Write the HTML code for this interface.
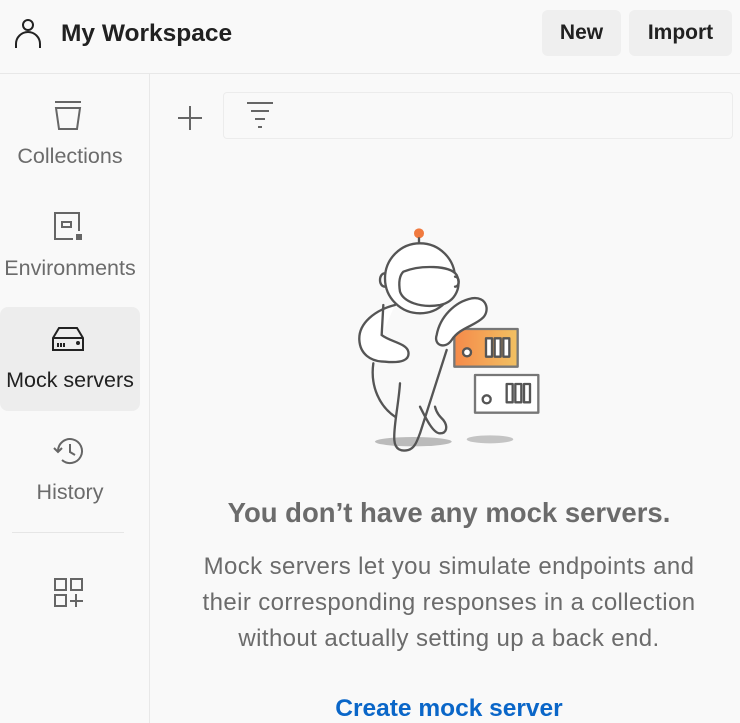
<!DOCTYPE html>
<html><head><meta charset="utf-8"><style>
body{margin:0;width:740px;height:723px;background:#f9f9f9;font-family:"Liberation Sans",sans-serif;overflow:hidden;position:relative}
.a{position:absolute}
.btn{position:absolute;top:10px;height:46px;background:#efefef;border-radius:6px;font-size:21px;font-weight:bold;color:#212121;line-height:46px;text-align:center}
.nav{position:absolute;left:-10px;width:160px;text-align:center;font-size:21.5px;color:#6b6b6b}
</style></head><body>
<svg class="a" style="left:14px;top:17px" width="28" height="32" viewBox="0 0 28 32" fill="none" stroke="#222" stroke-width="2"><circle cx="14" cy="8" r="5"/><path d="M2 31v-4a12 12 0 0 1 24 0v4"/></svg>
<div class="a" style="left:61px;top:20px;font-size:24.5px;font-weight:bold;color:#212121">My Workspace</div>
<div class="btn" style="left:542px;width:79px">New</div>
<div class="btn" style="left:629px;width:103px">Import</div>
<div class="a" style="left:0;top:73px;width:740px;height:1px;background:#e8e8e8"></div>
<div class="a" style="left:149px;top:74px;width:1px;height:649px;background:#e8e8e8"></div>

<svg class="a" style="left:52px;top:100px" width="32" height="32" viewBox="0 0 32 32" fill="none" stroke="#666" stroke-width="2"><path d="M3 2h26"/><path d="M4 8h24l-3 21H7z"/></svg>
<div class="nav" style="top:144px">Collections</div>
<svg class="a" style="left:53px;top:211px" width="32" height="32" viewBox="0 0 32 32" fill="none" stroke="#666" stroke-width="2"><path d="M26 20V2H2v26h18"/><rect x="9" y="11" width="9" height="5"/><rect x="24" y="24" width="4" height="4" fill="#666"/></svg>
<div class="nav" style="top:256px">Environments</div>
<div class="a" style="left:0;top:307px;width:140px;height:104px;background:#ededed;border-radius:8px"></div>
<svg class="a" style="left:51px;top:326px" width="34" height="26" viewBox="0 0 34 26" fill="none" stroke="#222" stroke-width="2"><path d="M2 12L8 2h18l6 10v12H2z"/><path d="M2 12h30"/><path d="M7 17v4M10 17v4M13 17v4"/><circle cx="27" cy="17" r="1" fill="#222"/></svg>
<div class="nav" style="top:368px;color:#212121">Mock servers</div>
<svg class="a" style="left:52px;top:434px" width="34" height="34" viewBox="0 0 34 34" fill="none" stroke="#666" stroke-width="2"><path d="M6 17a12 12 0 1 1 4 9"/><path d="M2 14l4 4 4-4"/><path d="M18 10v8l5 3"/></svg>
<div class="nav" style="top:480px">History</div>
<div class="a" style="left:12px;top:532px;width:112px;height:1px;background:#e6e6e6"></div>
<svg class="a" style="left:53px;top:577px" width="32" height="32" viewBox="0 0 32 32" fill="none" stroke="#666" stroke-width="2"><rect x="2" y="2" width="11" height="11"/><rect x="18" y="2" width="11" height="11"/><rect x="2" y="18" width="11" height="11"/><path d="M23 17v13M17 24h13"/></svg>

<svg class="a" style="left:176px;top:104px" width="28" height="28" viewBox="0 0 28 28" stroke="#666" stroke-width="2"><path d="M14 2v24M2 14h24"/></svg>
<div class="a" style="left:223px;top:92px;width:508px;height:45px;border:1px solid #ececec;border-radius:4px;background:#f9f9f9"></div>
<svg class="a" style="left:245px;top:101px" width="30" height="28" viewBox="0 0 30 28" stroke="#666" stroke-width="2"><path d="M2 2h26M6 10h18M10 18h10M13 26h4"/></svg>

<svg class="a" style="left:340px;top:220px" width="220" height="240" viewBox="0 0 660 720" fill="none" stroke="#555" stroke-width="7" stroke-linejoin="round" stroke-linecap="round">
<defs><linearGradient id="g" x1="0" x2="1"><stop offset="0" stop-color="#f58a4a"/><stop offset="1" stop-color="#f2c162"/></linearGradient></defs>
<ellipse cx="220" cy="665" rx="115" ry="14" fill="#bbb" stroke="none"/>
<ellipse cx="450" cy="658" rx="70" ry="12" fill="#c4c4c4" stroke="none"/>
<circle cx="237" cy="40" r="15" fill="#f07a3f" stroke="none"/>
<path d="M237 55v20"/>
<path d="M165 255C105 270 55 310 58 360C60 400 90 425 135 425C185 430 210 420 205 395C200 370 150 365 125 345" fill="#fff"/>
<path d="M100 430C90 500 120 560 165 590"/>
<path d="M240 560C260 600 280 640 300 640C320 640 325 620 310 600C300 590 290 580 285 560"/>
<path d="M180 490C175 560 160 620 163 660C165 690 185 695 205 690C225 685 232 660 240 640L320 390"/>
<path d="M130 255L125 345"/>
<circle cx="240" cy="175" r="105" fill="#fff"/>
<path d="M190 155c50-20 140-20 160 10 15 30 0 80-50 90-60 10-110-10-120-40-5-30 0-50 10-60z" fill="#fff"/>
<path d="M135 160c-20 0-20 40 0 40M345 170c15 0 15 30 0 30"/>
<rect x="343" y="327" width="190" height="113" fill="url(#g)" stroke="#777"/>
<circle cx="381" cy="397" r="12" fill="#fff"/>
<rect x="438" y="355" width="18" height="55" fill="#fff"/><rect x="464" y="355" width="18" height="55" fill="#fff"/><rect x="490" y="355" width="18" height="55" fill="#fff"/>
<path d="M290 345C300 290 345 245 395 235C440 228 450 270 430 292C405 318 360 322 335 360C315 390 280 375 290 345Z" fill="#fff"/>
<rect x="405" y="465" width="190" height="113" fill="#fff" stroke="#777"/>
<circle cx="440" cy="538" r="12"/>
<rect x="500" y="492" width="18" height="55"/><rect x="526" y="492" width="18" height="55"/><rect x="552" y="492" width="18" height="55"/>
</svg>

<div class="a" style="left:100px;top:497px;width:698px;text-align:center;font-size:27.5px;font-weight:bold;color:#6b6b6b">You don’t have any mock servers.</div>
<div class="a" style="left:100px;top:549px;width:698px;text-align:center;font-size:24px;letter-spacing:0.4px;line-height:36px;color:#6b6b6b">Mock servers let you simulate endpoints and<br>their corresponding responses in a collection<br>without actually setting up a back end.</div>
<div class="a" style="left:100px;top:695px;width:698px;text-align:center;font-size:24.5px;font-weight:bold;color:#0a66c8">Create mock server</div>
</body></html>
